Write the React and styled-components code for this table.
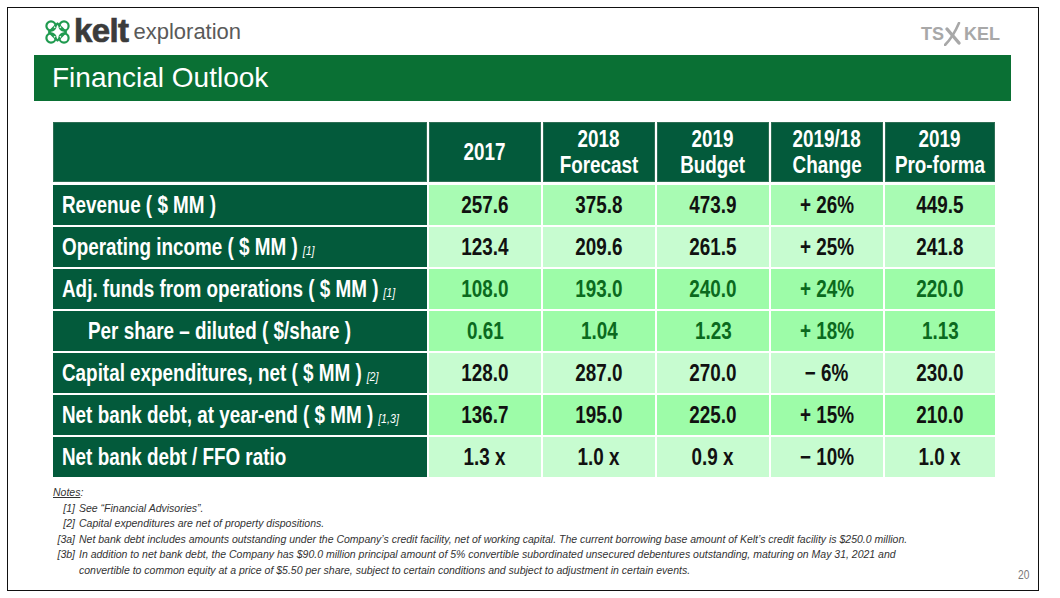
import styled, { createGlobalStyle } from "styled-components";

const GlobalStyle = createGlobalStyle`
  html, body { margin: 0; padding: 0; background: #fff; }
  body { font-family: "Liberation Sans", Arial, sans-serif; }
`;

const headers = [
  ["2017"],
  ["2018", "Forecast"],
  ["2019", "Budget"],
  ["2019/18", "Change"],
  ["2019", "Pro-forma"],
];

const rows = [
  { label: "Revenue ( $ MM )", values: ["257.6", "375.8", "473.9", "+ 26%", "449.5"], tone: "mid" },
  { label: "Operating income ( $ MM )", note: "[1]", values: ["123.4", "209.6", "261.5", "+ 25%", "241.8"], tone: "light" },
  { label: "Adj. funds from operations ( $ MM )", note: "[1]", values: ["108.0", "193.0", "240.0", "+ 24%", "220.0"], tone: "bright", green: true },
  { label: "Per share – diluted ( $/share )", indent: true, values: ["0.61", "1.04", "1.23", "+ 18%", "1.13"], tone: "bright", green: true },
  { label: "Capital expenditures, net ( $ MM )", note: "[2]", values: ["128.0", "287.0", "270.0", "− 6%", "230.0"], tone: "light" },
  { label: "Net bank debt, at year-end ( $ MM )", note: "[1,3]", values: ["136.7", "195.0", "225.0", "+ 15%", "210.0"], tone: "bright" },
  { label: "Net bank debt / FFO ratio", values: ["1.3 x", "1.0 x", "0.9 x", "− 10%", "1.0 x"], tone: "light" },
];

const notes = [
  ["[1]", "See “Financial Advisories”."],
  ["[2]", "Capital expenditures are net of property dispositions."],
  ["[3a]", "Net bank debt includes amounts outstanding under the Company’s credit facility, net of working capital. The current borrowing base amount of Kelt’s credit facility is $250.0 million."],
  ["[3b]", "In addition to net bank debt, the Company has $90.0 million principal amount of 5% convertible subordinated unsecured debentures outstanding, maturing on May 31, 2021 and convertible to common equity at a price of $5.50 per share, subject to certain conditions and subject to adjustment in certain events."],
];

const tones = { mid: "#a8fbb3", bright: "#9dfca8", light: "#c7fcd0" };

function KnotIcon() {
  return (
    <svg width="27" height="26" viewBox="0 0 27 26">
      <g fill="none" stroke="#1f9a4f" strokeWidth="2.2" strokeLinejoin="round">
        <circle cx="7" cy="7" r="4.6" />
        <circle cx="20" cy="7" r="4.6" />
        <circle cx="7" cy="19" r="4.6" />
        <circle cx="20" cy="19" r="4.6" />
        <path d="M13.5 4.5 L22 13 L13.5 21.5 L5 13 Z" />
      </g>
      <g fill="none" stroke="#fff" strokeWidth="1.2">
        <path d="M10 7.6 L11.2 8.8" />
        <path d="M17 7.6 L15.8 8.8" />
        <path d="M10 18.4 L11.2 17.2" />
        <path d="M17 18.4 L15.8 17.2" />
      </g>
    </svg>
  );
}

function SwooshX() {
  return (
    <svg width="20" height="24" viewBox="0 0 20 24">
      <g fill="none" stroke="#a8a8a8" strokeLinecap="round">
        <path d="M3 7 L15 21" strokeWidth="3.4" />
        <path d="M15 1 C 12 8, 8 16, 1 23" strokeWidth="2.6" />
      </g>
    </svg>
  );
}

export default function App() {
  return (
    <>
      <GlobalStyle />
      <Page>
        <Frame>
          <LogoRow>
            <Brand>
              <KnotIcon />
              <Kelt>kelt</Kelt>
              <Exploration>exploration</Exploration>
            </Brand>
            <Tsx>
              TS
              <SwooshX />
              KEL
            </Tsx>
          </LogoRow>
          <TitleBar>Financial Outlook</TitleBar>
          <Table>
            <HeadCell />
            {headers.map((h, i) => (
              <HeadCell key={i}>
                {h.map((line) => (
                  <Narrow key={line} $origin="center">{line}</Narrow>
                ))}
              </HeadCell>
            ))}
            {rows.map((r) => (
              <Row key={r.label}>
                <LabelCell $indent={r.indent}>
                  <Narrow $origin="left">
                    {r.label}
                    {r.note && <Ref>{r.note}</Ref>}
                  </Narrow>
                </LabelCell>
                {r.values.map((v, i) => (
                  <ValueCell key={i} $tone={r.tone} $green={r.green}>
                    <Narrow $origin="center">{v}</Narrow>
                  </ValueCell>
                ))}
              </Row>
            ))}
          </Table>
          <Footer>
            <Notes>
              <NotesTitle>Notes</NotesTitle>:
              <NoteList>
                {notes.map(([m, t]) => (
                  <Note key={m}>
                    <Marker>{m}</Marker>
                    <span>{t}</span>
                  </Note>
                ))}
              </NoteList>
            </Notes>
            <PageNum>20</PageNum>
          </Footer>
        </Frame>
      </Page>
    </>
  );
}

const Page = styled.div`
  width: 1060px;
  height: 598px;
  padding: 7px 21px 7px 7px;
  box-sizing: border-box;
`;

const Frame = styled.div`
  height: 584px;
  border: 1.5px solid #111;
  box-sizing: border-box;
  display: flex;
  flex-direction: column;
  overflow: hidden;
`;

const LogoRow = styled.div`
  flex-shrink: 0;
  height: 46px;
  display: flex;
  align-items: center;
  justify-content: space-between;
  padding: 0 38px 0 36px;
`;

const Brand = styled.div`
  display: flex;
  align-items: center;
  gap: 3px;
  margin-top: 2px;
`;

const Kelt = styled.span`
  font-family: "Liberation Sans", Arial, sans-serif;
  font-weight: 700;
  font-size: 33px;
  letter-spacing: -0.6px;
  color: #3b3b3b;
  line-height: 1;
  margin-top: -4px;
  -webkit-text-stroke: 0.7px #3b3b3b;
`;

const Exploration = styled.span`
  font-family: "Liberation Sans", Arial, sans-serif;
  font-size: 22px;
  color: #5a5a5a;
  line-height: 1;
  margin-left: 2px;
`;

const Tsx = styled.div`
  display: flex;
  align-items: center;
  font-family: "Liberation Sans", Arial, sans-serif;
  font-weight: 700;
  font-size: 18px;
  color: #a8a8a8;
  margin-top: 6px;
`;

const TitleBar = styled.div`
  flex-shrink: 0;
  height: 46px;
  margin: 1px 27px 0 26px;
  background: #0a7034;
  color: #fff;
  font-family: "Liberation Sans", Arial, sans-serif;
  font-size: 28px;
  line-height: 46px;
  padding-left: 18px;
`;

const Table = styled.div`
  flex-shrink: 0;
  margin: 21px 0 0 45px;
  width: 940px;
  display: grid;
  grid-template-columns: 374px repeat(4, 112px) 110px;
  column-gap: 2px;
  row-gap: 2px;
  font-family: "Liberation Sans", Arial, sans-serif;
  font-weight: 700;
  font-size: 23px;
`;

const Narrow = styled.span`
  display: inline-block;
  flex-shrink: 0;
  white-space: nowrap;
  transform: scaleX(0.82);
  transform-origin: ${(p) => p.$origin} center;
`;

const Row = styled.div`
  display: contents;
`;

const HeadCell = styled.div`
  height: 60px;
  background: #035a3b;
  color: #fff;
  display: flex;
  flex-direction: column;
  align-items: center;
  justify-content: center;
  line-height: 26px;
  margin-bottom: 1px;
  box-shadow: inset 0 0 0 1px #2d6e54;
`;

const LabelCell = styled.div`
  height: 40px;
  background: #035a3b;
  color: #fff;
  display: flex;
  align-items: center;
  padding-left: ${(p) => (p.$indent ? "35px" : "9px")};
`;

const Ref = styled.span`
  font-weight: 400;
  font-style: italic;
  font-size: 13px;
  margin-left: 6px;
`;

const ValueCell = styled.div`
  height: 40px;
  background: ${(p) => tones[p.$tone]};
  color: ${(p) => (p.$green ? "#0b6a1e" : "#111")};
  display: flex;
  align-items: center;
  justify-content: center;
`;

const Footer = styled.div`
  flex: 1;
  display: flex;
  justify-content: space-between;
  align-items: flex-end;
  padding: 8px 8px 8px 45px;
`;

const Notes = styled.div`
  align-self: flex-start;
  font-family: "Liberation Sans", Arial, sans-serif;
  font-style: italic;
  font-size: 10.5px;
  line-height: 15.5px;
  color: #333;
`;

const NotesTitle = styled.span`
  text-decoration: underline;
`;

const NoteList = styled.div`
  display: flex;
  flex-direction: column;
`;

const Note = styled.div`
  display: grid;
  grid-template-columns: 22px 1fr;
  column-gap: 4px;
  width: 880px;
`;

const Marker = styled.span`
  text-align: right;
`;

const PageNum = styled.div`
  font-family: "Liberation Sans", Arial, sans-serif;
  font-size: 12px;
  color: #777;
  transform: scaleX(0.85);
`;
